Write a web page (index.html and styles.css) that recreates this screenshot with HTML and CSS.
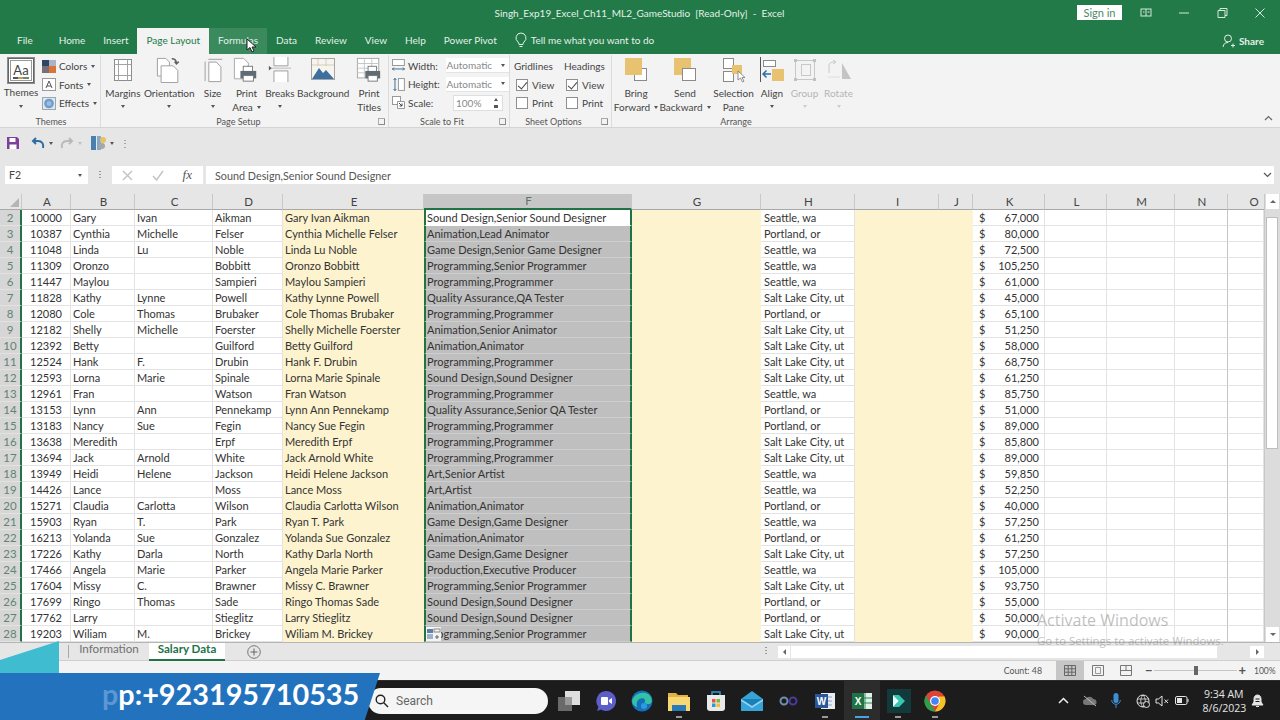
FILE: index.html
```html
<!DOCTYPE html>
<html>
<head>
    <title>Singh_Exp19_Excel_Ch11_ML2_GameStudio [Read-Only] - Excel</title>
    <link rel="stylesheet" href="styles.css">
</head>
<body>
    <header class="titlebar">
        <div class="title-row">
            <div class="doc-title">Singh_Exp19_Excel_Ch11_ML2_GameStudio&nbsp; [Read-Only]&nbsp; -&nbsp; Excel</div>
            <button class="sign-in">Sign in</button>
            <div class="window-buttons">
                <svg width="12" height="10" viewBox="0 0 12 10"><rect x="1" y="1" width="10" height="7" fill="none" stroke="#d5e8dc"/><path d="M6 1v7M3 4h1.500M7.500 4h2" stroke="#d5e8dc"/></svg>
                <svg width="12" height="10" viewBox="0 0 12 10"><path d="M1 5h10" stroke="#d5e8dc"/></svg>
                <svg width="12" height="10" viewBox="0 0 12 10"><path d="M2 2.500h7v7H2zM4 2.500V.5h7v7H9" fill="none" stroke="#d5e8dc"/></svg>
                <svg width="12" height="10" viewBox="0 0 12 10"><path d="M1.500 .5l9 9M10.500 .5l-9 9" stroke="#d5e8dc"/></svg>
            </div>
        </div>
        <nav class="tab-row">
            <span class="tab tab-file">File</span>
            <span class="tab">Home</span>
            <span class="tab">Insert</span>
            <span class="tab tab-active">Page Layout</span>
            <span class="tab tab-hover">Formulas</span>
            <span class="tab">Data</span>
            <span class="tab">Review</span>
            <span class="tab">View</span>
            <span class="tab">Help</span>
            <span class="tab">Power Pivot</span>
            <span class="tell-me">
                <svg width="12" height="16" viewBox="0 0 12 16"><path d="M6 1a5 5 0 0 0-3 9c.6.600 1 1.500 1 2.500h4c0-1 .4-1.900 1-2.500a5 5 0 0 0-3-9zM4.500 14.500h3" fill="none" stroke="#e4f1e9"/></svg>
                Tell me what you want to do
            </span>
            <span class="share">
                <svg width="14" height="14" viewBox="0 0 14 14"><circle cx="6" cy="4.500" r="3.500" fill="none" stroke="#e4f1e9"/><path d="M1 13c.5-3 2-4.500 5-4.500M9 11.500h4M11 9.500v4" fill="none" stroke="#e4f1e9"/></svg>
                Share
            </span>
        </nav>
    </header>

    <section class="ribbon">
        <div class="group group-themes">
            <div class="group-body">
                <div class="big btn-themes">
                    <div class="themes-icon"><span>Aa</span><i></i></div>
                    <span>Themes</span>
                    <span class="caret-line"><i class="caret"></i></span>
                </div>
                <div class="small-list">
                    <div class="small-item">
                        <svg width="14" height="13" viewBox="0 0 14 13"><rect width="7" height="6" fill="#2f4565"/><rect x="7" width="7" height="6" fill="#a9b4c6"/><rect y="6" width="7" height="7" fill="#7a6f78"/><rect x="7" y="6" width="7" height="7" fill="#d9743b"/></svg>
                        <span>Colors</span><i class="caret"></i>
                    </div>
                    <div class="small-item">
                        <svg class="font-box" width="14" height="13" viewBox="0 0 14 13"><rect x=".5" y=".5" width="13" height="12" fill="#fff" stroke="#9a9a9a"/><path d="M4 10l3-7 3 7M5 8h4" fill="none" stroke="#555"/></svg>
                        <span>Fonts</span><i class="caret"></i>
                    </div>
                    <div class="small-item">
                        <svg width="14" height="13" viewBox="0 0 14 13"><rect x=".5" y=".5" width="13" height="12" fill="#dfe6ee" stroke="#9aa7b5"/><circle cx="7" cy="6.500" r="4.800" fill="#6d9bcb"/><circle cx="7" cy="6.500" r="2.500" fill="#9dbcdc"/></svg>
                        <span>Effects</span><i class="caret"></i>
                    </div>
                </div>
            </div>
            <div class="group-label">Themes</div>
        </div>

        <div class="group group-page">
            <div class="group-body">
                <div class="big btn-margins">
                    <svg class="big-icon" width="22" height="26" viewBox="0 0 22 26"><rect x="2.500" y="2.500" width="17" height="21" fill="#fff" stroke="#8d8d8d"/><path d="M6.500 2.500v21M15.500 2.500v21M2.500 7.500h17M2.500 18.500h17" stroke="#a3a3a3"/></svg>
                    <span>Margins</span>
                    <span class="caret-line"><i class="caret"></i></span>
                </div>
                <div class="big btn-orientation">
                    <svg class="big-icon" width="28" height="28" viewBox="0 0 28 28"><path d="M1.500 1.500h9l4 4v15h-13z" fill="#fff" stroke="#9a9a9a"/><path d="M5.500 9.500h13l5 5v13h-18z" fill="#fff" stroke="#9a9a9a"/><path d="M17 2c3 0 4.500 1 5 4M20 5l2 2.500L24.500 5" fill="none" stroke="#5d6268" stroke-width="1.600"/></svg>
                    <span>Orientation</span>
                    <span class="caret-line"><i class="caret"></i></span>
                </div>
                <div class="big btn-size">
                    <svg class="big-icon" width="22" height="28" viewBox="0 0 22 28"><path d="M6.500 5.500h8l5 5v16h-13z" fill="#fff" stroke="#9a9a9a"/><path d="M6 2.500h15M2.500 5v21" stroke="#9a9a9a"/></svg>
                    <span>Size</span>
                    <span class="caret-line"><i class="caret"></i></span>
                </div>
                <div class="big btn-area">
                    <svg class="big-icon" width="28" height="28" viewBox="0 0 28 28"><path d="M1.500 1.500h10l5 5v17h-15z" fill="#fff" stroke="#a5a5a5"/><rect x="11" y="10" width="10" height="7" fill="#fff" stroke="#777"/><rect x="8" y="15" width="17" height="8" fill="#5f6b75"/><rect x="11" y="20" width="11" height="6" fill="#fff" stroke="#777"/></svg>
                    <span>Print</span>
                    <span>Area<i class="caret caret-inline"></i></span>
                </div>
                <div class="big btn-breaks">
                    <svg class="big-icon" width="26" height="28" viewBox="0 0 26 28"><path d="M6.500 0v9.500h15V0M6.500 27v-12h15v12" fill="#fff" stroke="#9a9a9a"/><path d="M1 12h24" stroke="#b9b9b9"/><path d="M1 9.500l3 2.500-3 2.500z" fill="#5a5a5a"/></svg>
                    <span>Breaks</span>
                    <span class="caret-line"><i class="caret"></i></span>
                </div>
                <div class="big btn-background">
                    <svg class="big-icon" width="24" height="24" viewBox="0 0 24 24"><rect x=".5" y=".5" width="23" height="21" fill="#f7f4ee" stroke="#a5a5a5"/><path d="M1 7h22M7 1v7M15 1v7" stroke="#d5cdb9"/><path d="M1 21l7-11 4 5 3-3 8 9z" fill="#3d6f9f"/></svg>
                    <span>Background</span>
                </div>
                <div class="big btn-titles">
                    <svg class="big-icon" width="26" height="28" viewBox="0 0 26 28"><rect x=".5" y="1.500" width="23" height="21" fill="#fff" stroke="#a5a5a5"/><path d="M.5 7h23M.5 12h23M.5 17h23M8 1.500v21M16 1.500v21" stroke="#c4c4c4"/><rect x="12" y="10" width="9" height="7" fill="#fff" stroke="#777"/><rect x="9" y="15" width="16" height="8" fill="#5f6b75"/><rect x="12" y="20" width="10" height="6" fill="#fff" stroke="#777"/></svg>
                    <span>Print</span>
                    <span>Titles</span>
                </div>
            </div>
            <div class="group-label label-launch">Page Setup<i class="launcher"></i></div>
        </div>

        <div class="group group-scale">
            <div class="group-body scale-rows">
                <div class="scale-row">
                    <svg width="13" height="13" viewBox="0 0 13 13"><rect x=".5" y=".5" width="12" height="6" fill="#fff" stroke="#999"/><path d="M0 10h13M2 8.500L.5 10 2 11.500M11 8.500l1.500 1.500-1.500 1.500" fill="none" stroke="#3f6f94"/></svg>
                    <label>Width:</label>
                    <div class="combo">Automatic<i class="caret"></i></div>
                </div>
                <div class="scale-row">
                    <svg width="13" height="13" viewBox="0 0 13 13"><rect x="6.500" y=".5" width="6" height="12" fill="#fff" stroke="#999"/><path d="M3 0v13M1.500 2L3 .5 4.500 2M1.500 11L3 12.500 4.500 11" fill="none" stroke="#3f6f94"/></svg>
                    <label>Height:</label>
                    <div class="combo">Automatic<i class="caret"></i></div>
                </div>
                <div class="scale-row">
                    <svg width="13" height="13" viewBox="0 0 13 13"><rect x=".5" y=".5" width="8" height="8" fill="#fff" stroke="#999"/><path d="M5.500 5.500h7v7h-7z" fill="#fff" stroke="#999"/><path d="M7 7l3 3M10 7.500V10H7.500" fill="none" stroke="#444"/></svg>
                    <label>Scale:</label>
                    <div class="spin">100%<i class="spin-arrows"></i></div>
                </div>
            </div>
            <div class="group-label label-launch">Scale to Fit<i class="launcher"></i></div>
        </div>

        <div class="group group-sheet">
            <div class="group-body sheet-cols">
                <div class="sheet-col">
                    <div class="sheet-head">Gridlines</div>
                    <div class="check-row"><i class="check checked"></i>View</div>
                    <div class="check-row"><i class="check"></i>Print</div>
                </div>
                <div class="sheet-col">
                    <div class="sheet-head">Headings</div>
                    <div class="check-row"><i class="check checked"></i>View</div>
                    <div class="check-row"><i class="check"></i>Print</div>
                </div>
            </div>
            <div class="group-label label-launch">Sheet Options<i class="launcher"></i></div>
        </div>

        <div class="group group-arrange">
            <div class="group-body">
                <div class="big btn-forward">
                    <svg class="big-icon" width="24" height="24" viewBox="0 0 24 24"><rect x="10.500" y="10.500" width="12" height="12" fill="#fff" stroke="#8a8a8a"/><rect x="1" y="0" width="17" height="17" fill="#e6c271"/></svg>
                    <span>Bring</span>
                    <span>Forward<i class="caret caret-inline"></i></span>
                </div>
                <div class="big btn-backward">
                    <svg class="big-icon" width="24" height="24" viewBox="0 0 24 24"><rect x="1" y="0" width="17" height="17" fill="#e6c271"/><rect x="9.500" y="10.500" width="13" height="12" fill="#fff" stroke="#8a8a8a"/></svg>
                    <span>Send</span>
                    <span>Backward<i class="caret caret-inline"></i></span>
                </div>
                <div class="big btn-pane">
                    <svg class="big-icon" width="24" height="24" viewBox="0 0 24 24"><rect x="1.500" y=".5" width="10" height="10" fill="#fff" stroke="#8a8a8a"/><rect x="1.500" y="13.500" width="10" height="10" fill="#fff" stroke="#8a8a8a"/><rect x="10" y="7" width="10" height="9" fill="#e6c271"/><path d="M16 13v9l2.500-2 2 4 1.500-.8-2-3.700h3z" fill="#fff" stroke="#777" stroke-width=".8"/></svg>
                    <span>Selection</span>
                    <span>Pane</span>
                </div>
                <div class="big btn-align">
                    <svg class="big-icon" width="26" height="26" viewBox="0 0 26 26"><path d="M1.500 0v25" stroke="#555"/><rect x="4.500" y="3.500" width="12" height="6" fill="#fff" stroke="#8a8a8a"/><rect x="13" y="12" width="12" height="12" fill="#e6c271"/><path d="M4 17h8M7.500 13.500L4 17l3.500 3.500" fill="none" stroke="#2b6ea5" stroke-width="1.500"/></svg>
                    <span>Align</span>
                    <span class="caret-line"><i class="caret"></i></span>
                </div>
                <div class="big btn-group muted">
                    <svg class="big-icon" width="26" height="26" viewBox="0 0 26 26"><rect x="3.500" y="3.500" width="19" height="19" fill="none" stroke="#c8c8c8"/><rect x="9.500" y="7.500" width="9" height="11" fill="none" stroke="#c8c8c8"/><path d="M2 2h3v3H2zM21 2h3v3h-3zM2 21h3v3H2zM21 21h3v3h-3z" fill="#c0c0c0"/></svg>
                    <span>Group</span>
                    <span class="caret-line"><i class="caret"></i></span>
                </div>
                <div class="big btn-rotate muted">
                    <svg class="big-icon" width="26" height="26" viewBox="0 0 26 26"><path d="M16 6l9 16h-9z" fill="#c4c4c4"/><path d="M3 16V9c0-3 2-4 6-4M7 3l3 2-3 2" fill="none" stroke="#c8c8c8"/><path d="M2 20h12" stroke="#dcdcdc"/></svg>
                    <span>Rotate</span>
                    <span class="caret-line"><i class="caret"></i></span>
                </div>
            </div>
            <div class="group-label">Arrange</div>
        </div>
        <svg class="ribbon-collapse" width="9" height="6" viewBox="0 0 9 6"><path d="M1 5l3.500-3.500L8 5" fill="none" stroke="#666" stroke-width="1.200"/></svg>
    </section>

    <section class="qat">
        <svg width="12" height="12" viewBox="0 0 12 12"><path d="M0 0h10l2 2v10H0z" fill="#7d3f98"/><rect x="2.500" y="1" width="6" height="4" fill="#fff"/><rect x="2.500" y="7.500" width="7" height="4.500" fill="#fff"/></svg>
        <svg class="qat-undo" width="14" height="12" viewBox="0 0 14 12"><path d="M12 11c1-4-1-7-5-7H2M5 1L2 4l3 3" fill="none" stroke="#2d6da3" stroke-width="2"/></svg>
        <i class="caret"></i>
        <svg class="qat-redo" width="14" height="12" viewBox="0 0 14 12"><path d="M2 11C1 7 3 4 7 4h5M9 1l3 3-3 3" fill="none" stroke="#b9b9b9" stroke-width="2"/></svg>
        <i class="caret caret-faint"></i>
        <svg class="qat-cols" width="15" height="14" viewBox="0 0 15 14"><rect width="5" height="14" fill="#4a7fae"/><rect x="6" width="4" height="14" fill="#83a8c8"/><circle cx="12" cy="4" r="3" fill="#e4c265"/><circle cx="11" cy="10" r="3" fill="#a7a7a7"/></svg>
        <i class="caret"></i>
        <span class="qat-more">&#8942;</span>
    </section>

    <section class="formula-bar">
        <div class="name-box">F2<i class="caret"></i></div>
        <span class="grip"></span>
        <div class="fx-buttons">
            <svg width="11" height="11" viewBox="0 0 11 11"><path d="M1 1l9 9M10 1l-9 9" stroke="#c4c4c4" stroke-width="1.500"/></svg>
            <svg width="12" height="11" viewBox="0 0 12 11"><path d="M1 6l3.500 4L11 1" fill="none" stroke="#c4c4c4" stroke-width="1.500"/></svg>
            <em>fx</em>
        </div>
        <div class="formula-input">Sound Design,Senior Sound Designer
            <svg width="9" height="6" viewBox="0 0 9 6"><path d="M1 1l3.500 3.500L8 1" fill="none" stroke="#555" stroke-width="1.200"/></svg>
        </div>
    </section>

    <main class="sheet">
        <table class="grid">
            <colgroup>
                <col class="c-head"><col class="c-a"><col class="c-b"><col class="c-c"><col class="c-d"><col class="c-e"><col class="c-f"><col class="c-g"><col class="c-h"><col class="c-i"><col class="c-j"><col class="c-k"><col class="c-l"><col class="c-m"><col class="c-n"><col class="c-o">
            </colgroup>
            <thead>
                <tr><th class="corner"><i></i></th><th>A</th><th>B</th><th>C</th><th>D</th><th>E</th><th class="col-selected">F</th><th>G</th><th>H</th><th>I</th><th>J</th><th>K</th><th>L</th><th>M</th><th>N</th><th class="col-cut">O</th></tr>
            </thead>
            <tbody>
                <tr class="active-row"><th>2</th><td>10000</td><td>Gary</td><td>Ivan</td><td>Aikman</td><td>Gary Ivan Aikman</td><td>Sound Design,Senior Sound Designer</td><td></td><td>Seattle, wa</td><td></td><td></td><td><span>$</span>67,000</td><td></td><td></td><td></td><td></td></tr>
                <tr><th>3</th><td>10387</td><td>Cynthia</td><td>Michelle</td><td>Felser</td><td>Cynthia Michelle Felser</td><td>Animation,Lead Animator</td><td></td><td>Portland, or</td><td></td><td></td><td><span>$</span>80,000</td><td></td><td></td><td></td><td></td></tr>
                <tr><th>4</th><td>11048</td><td>Linda</td><td>Lu</td><td>Noble</td><td>Linda Lu Noble</td><td>Game Design,Senior Game Designer</td><td></td><td>Seattle, wa</td><td></td><td></td><td><span>$</span>72,500</td><td></td><td></td><td></td><td></td></tr>
                <tr><th>5</th><td>11309</td><td>Oronzo</td><td></td><td>Bobbitt</td><td>Oronzo Bobbitt</td><td>Programming,Senior Programmer</td><td></td><td>Seattle, wa</td><td></td><td></td><td><span>$</span>105,250</td><td></td><td></td><td></td><td></td></tr>
                <tr><th>6</th><td>11447</td><td>Maylou</td><td></td><td>Sampieri</td><td>Maylou Sampieri</td><td>Programming,Programmer</td><td></td><td>Seattle, wa</td><td></td><td></td><td><span>$</span>61,000</td><td></td><td></td><td></td><td></td></tr>
                <tr><th>7</th><td>11828</td><td>Kathy</td><td>Lynne</td><td>Powell</td><td>Kathy Lynne Powell</td><td>Quality Assurance,QA Tester</td><td></td><td>Salt Lake City, ut</td><td></td><td></td><td><span>$</span>45,000</td><td></td><td></td><td></td><td></td></tr>
                <tr><th>8</th><td>12080</td><td>Cole</td><td>Thomas</td><td>Brubaker</td><td>Cole Thomas Brubaker</td><td>Programming,Programmer</td><td></td><td>Portland, or</td><td></td><td></td><td><span>$</span>65,100</td><td></td><td></td><td></td><td></td></tr>
                <tr><th>9</th><td>12182</td><td>Shelly</td><td>Michelle</td><td>Foerster</td><td>Shelly Michelle Foerster</td><td>Animation,Senior Animator</td><td></td><td>Salt Lake City, ut</td><td></td><td></td><td><span>$</span>51,250</td><td></td><td></td><td></td><td></td></tr>
                <tr><th>10</th><td>12392</td><td>Betty</td><td></td><td>Guilford</td><td>Betty Guilford</td><td>Animation,Animator</td><td></td><td>Salt Lake City, ut</td><td></td><td></td><td><span>$</span>58,000</td><td></td><td></td><td></td><td></td></tr>
                <tr><th>11</th><td>12524</td><td>Hank</td><td>F.</td><td>Drubin</td><td>Hank F. Drubin</td><td>Programming,Programmer</td><td></td><td>Salt Lake City, ut</td><td></td><td></td><td><span>$</span>68,750</td><td></td><td></td><td></td><td></td></tr>
                <tr><th>12</th><td>12593</td><td>Lorna</td><td>Marie</td><td>Spinale</td><td>Lorna Marie Spinale</td><td>Sound Design,Sound Designer</td><td></td><td>Salt Lake City, ut</td><td></td><td></td><td><span>$</span>61,250</td><td></td><td></td><td></td><td></td></tr>
                <tr><th>13</th><td>12961</td><td>Fran</td><td></td><td>Watson</td><td>Fran Watson</td><td>Programming,Programmer</td><td></td><td>Seattle, wa</td><td></td><td></td><td><span>$</span>85,750</td><td></td><td></td><td></td><td></td></tr>
                <tr><th>14</th><td>13153</td><td>Lynn</td><td>Ann</td><td>Pennekamp</td><td>Lynn Ann Pennekamp</td><td>Quality Assurance,Senior QA Tester</td><td></td><td>Portland, or</td><td></td><td></td><td><span>$</span>51,000</td><td></td><td></td><td></td><td></td></tr>
                <tr><th>15</th><td>13183</td><td>Nancy</td><td>Sue</td><td>Fegin</td><td>Nancy Sue Fegin</td><td>Programming,Programmer</td><td></td><td>Portland, or</td><td></td><td></td><td><span>$</span>89,000</td><td></td><td></td><td></td><td></td></tr>
                <tr><th>16</th><td>13638</td><td>Meredith</td><td></td><td>Erpf</td><td>Meredith Erpf</td><td>Programming,Programmer</td><td></td><td>Salt Lake City, ut</td><td></td><td></td><td><span>$</span>85,800</td><td></td><td></td><td></td><td></td></tr>
                <tr><th>17</th><td>13694</td><td>Jack</td><td>Arnold</td><td>White</td><td>Jack Arnold White</td><td>Programming,Programmer</td><td></td><td>Salt Lake City, ut</td><td></td><td></td><td><span>$</span>89,000</td><td></td><td></td><td></td><td></td></tr>
                <tr><th>18</th><td>13949</td><td>Heidi</td><td>Helene</td><td>Jackson</td><td>Heidi Helene Jackson</td><td>Art,Senior Artist</td><td></td><td>Seattle, wa</td><td></td><td></td><td><span>$</span>59,850</td><td></td><td></td><td></td><td></td></tr>
                <tr><th>19</th><td>14426</td><td>Lance</td><td></td><td>Moss</td><td>Lance Moss</td><td>Art,Artist</td><td></td><td>Seattle, wa</td><td></td><td></td><td><span>$</span>52,250</td><td></td><td></td><td></td><td></td></tr>
                <tr><th>20</th><td>15271</td><td>Claudia</td><td>Carlotta</td><td>Wilson</td><td>Claudia Carlotta Wilson</td><td>Animation,Animator</td><td></td><td>Portland, or</td><td></td><td></td><td><span>$</span>40,000</td><td></td><td></td><td></td><td></td></tr>
                <tr><th>21</th><td>15903</td><td>Ryan</td><td>T.</td><td>Park</td><td>Ryan T. Park</td><td>Game Design,Game Designer</td><td></td><td>Seattle, wa</td><td></td><td></td><td><span>$</span>57,250</td><td></td><td></td><td></td><td></td></tr>
                <tr><th>22</th><td>16213</td><td>Yolanda</td><td>Sue</td><td>Gonzalez</td><td>Yolanda Sue Gonzalez</td><td>Animation,Animator</td><td></td><td>Portland, or</td><td></td><td></td><td><span>$</span>61,250</td><td></td><td></td><td></td><td></td></tr>
                <tr><th>23</th><td>17226</td><td>Kathy</td><td>Darla</td><td>North</td><td>Kathy Darla North</td><td>Game Design,Game Designer</td><td></td><td>Salt Lake City, ut</td><td></td><td></td><td><span>$</span>57,250</td><td></td><td></td><td></td><td></td></tr>
                <tr><th>24</th><td>17466</td><td>Angela</td><td>Marie</td><td>Parker</td><td>Angela Marie Parker</td><td>Production,Executive Producer</td><td></td><td>Seattle, wa</td><td></td><td></td><td><span>$</span>105,000</td><td></td><td></td><td></td><td></td></tr>
                <tr><th>25</th><td>17604</td><td>Missy</td><td>C.</td><td>Brawner</td><td>Missy C. Brawner</td><td>Programming,Senior Programmer</td><td></td><td>Salt Lake City, ut</td><td></td><td></td><td><span>$</span>93,750</td><td></td><td></td><td></td><td></td></tr>
                <tr><th>26</th><td>17699</td><td>Ringo</td><td>Thomas</td><td>Sade</td><td>Ringo Thomas Sade</td><td>Sound Design,Sound Designer</td><td></td><td>Portland, or</td><td></td><td></td><td><span>$</span>55,000</td><td></td><td></td><td></td><td></td></tr>
                <tr><th>27</th><td>17762</td><td>Larry</td><td></td><td>Stieglitz</td><td>Larry Stieglitz</td><td>Sound Design,Sound Designer</td><td></td><td>Portland, or</td><td></td><td></td><td><span>$</span>50,000</td><td></td><td></td><td></td><td></td></tr>
                <tr><th>28</th><td>19203</td><td>Wiliam</td><td>M.</td><td>Brickey</td><td>Wiliam M. Brickey</td><td>Programming,Senior Programmer</td><td></td><td>Salt Lake City, ut</td><td></td><td></td><td><span>$</span>90,000</td><td></td><td></td><td></td><td></td></tr>
            </tbody>
        </table>
        <svg class="paste-tag" width="15" height="14" viewBox="0 0 15 14"><rect width="15" height="14" fill="#f4f4f4"/><rect x="1" y="2" width="6" height="4" fill="#5d7fa3"/><rect x="8" y="2" width="6" height="3" fill="none" stroke="#888"/><rect x="1" y="7" width="6" height="5" fill="#9bb2c9"/><path d="M9 10h4M11 8v4" stroke="#666"/></svg>
        <div class="vscroll">
            <div class="scroll-btn"><i class="tri-up"></i></div>
            <div class="vtrack"><div class="vthumb"></div></div>
            <div class="scroll-btn"><i class="tri-down"></i></div>
        </div>
    </main>

    <section class="sheet-tabs">
        <span class="tab-sep"></span>
        <span class="sheet-tab">Information</span>
        <span class="sheet-tab sheet-tab-active">Salary Data</span>
        <svg class="add-sheet" width="14" height="14" viewBox="0 0 14 14"><circle cx="7" cy="7" r="6.300" fill="none" stroke="#777"/><path d="M3.500 7h7M7 3.500v7" stroke="#666"/></svg>
        <div class="hscroll">
            <span class="grip"></span>
            <div class="scroll-btn"><i class="tri-left"></i></div>
            <div class="hthumb"></div>
            <div class="htrack"></div>
            <div class="scroll-btn scroll-btn-wide"><i class="tri-right"></i></div>
        </div>
    </section>

    <footer class="statusbar">
        <span class="count">Count: 48</span>
        <span class="view-btn view-on">
            <svg width="12" height="11" viewBox="0 0 12 11"><path d="M.5.500h11v10H.5zM.5 3.800h11M.5 7.200h11M4.200.5v10M7.800.5v10" fill="none" stroke="#666"/></svg>
        </span>
        <span class="view-btn">
            <svg width="12" height="11" viewBox="0 0 12 11"><path d="M.5.500h11v10H.5z" fill="none" stroke="#777"/><path d="M3.500 2.500h5v6h-5z" fill="none" stroke="#999"/></svg>
        </span>
        <span class="view-btn">
            <svg width="12" height="11" viewBox="0 0 12 11"><path d="M.5.500h11v10H.5zM.5 5.500h11M6 .5v5" fill="none" stroke="#777"/></svg>
        </span>
        <div class="zoom-slider">
            <span class="zoom-sign">&minus;</span>
            <div class="slider-track"><i></i></div>
            <span class="zoom-sign">+</span>
        </div>
        <span class="zoom-level">100%</span>
    </footer>

    <section class="taskbar">
        <div class="search-box">
            <svg width="14" height="14" viewBox="0 0 14 14"><circle cx="5.500" cy="5.500" r="4.300" fill="none" stroke="#222" stroke-width="1.400"/><path d="M8.800 8.800L13 13" stroke="#222" stroke-width="1.400"/></svg>
            <span>Search</span>
        </div>
        <div class="task-icons">
            <span class="task-icon">
                <svg width="22" height="20" viewBox="0 0 22 20"><rect y="6" width="14" height="14" fill="#6a6a6a"/><rect x="7" width="15" height="14" fill="#dedede"/><rect x="7" y="6" width="7" height="8" fill="#9a9a9a"/></svg>
            </span>
            <span class="task-icon">
                <svg width="22" height="22" viewBox="0 0 22 22"><path d="M11 1a10 10 0 1 1-5 18.600L2 21l1.400-4A10 10 0 0 1 11 1z" fill="#5b5fc7"/><rect x="6" y="7" width="7" height="8" rx="1" fill="#fff"/><path d="M14 10l3-2v6l-3-2z" fill="#fff"/></svg>
            </span>
            <span class="task-icon">
                <svg width="22" height="22" viewBox="0 0 22 22"><circle cx="11" cy="11" r="10.500" fill="#1271b8"/><path d="M1 11C3 3 12 1 17 4c4 2.500 5 8 2.500 9.500-2 1-5 .5-6-1 2-3-1-5-4-4-3 1-5 5-3 9C3 16 1 14 1 11z" fill="#35c1a5"/><circle cx="13" cy="16" r="3" fill="#2d9ae0"/></svg>
            </span>
            <span class="task-icon task-open">
                <svg width="22" height="20" viewBox="0 0 22 20"><path d="M0 2h8l2 2h10v15H0z" fill="#e2b33f"/><path d="M0 6h22v14H0z" fill="#f8d775"/><rect x="4" y="14" width="14" height="6" fill="#2a7ab8"/></svg>
            </span>
            <span class="task-icon">
                <svg width="20" height="21" viewBox="0 0 20 21"><path d="M1 5h18v13a3 3 0 0 1-3 3H4a3 3 0 0 1-3-3z" fill="#e9e9e9"/><path d="M6 5V2h8v3" fill="none" stroke="#2b9bd6" stroke-width="1.500"/><rect x="6" y="9" width="3.500" height="3.500" fill="#e8563f"/><rect x="10.500" y="9" width="3.500" height="3.500" fill="#7cb83f"/><rect x="6" y="13.500" width="3.500" height="3.500" fill="#2b9bd6"/><rect x="10.500" y="13.500" width="3.500" height="3.500" fill="#f3bd2f"/></svg>
            </span>
            <span class="task-icon">
                <svg width="22" height="20" viewBox="0 0 22 20"><path d="M0 8l11-8 11 8v12H0z" fill="#36a3d9"/><path d="M0 8l11 7 11-7" fill="#1c7fb6"/><path d="M0 8l11 7 11-7v2l-11 7L0 10z" fill="#8fd4f2"/></svg>
            </span>
            <span class="task-icon">
                <svg width="20" height="10" viewBox="0 0 20 10"><circle cx="5" cy="5" r="3.500" fill="none" stroke="#6f8fb0" stroke-width="2"/><circle cx="14" cy="5" r="3.500" fill="none" stroke="#4b3aa0" stroke-width="2"/></svg>
            </span>
            <span class="task-icon task-open">
                <svg width="20" height="20" viewBox="0 0 20 20"><rect x="6" y="2" width="14" height="16" fill="#e8edf4"/><path d="M9 6h8M9 10h8M9 14h8" stroke="#8aa4c8"/><rect y="3" width="13" height="14" fill="#2b579a"/><text x="6.500" y="14" font-family="Liberation Sans" font-size="10" font-weight="700" fill="#fff" text-anchor="middle">W</text></svg>
            </span>
            <span class="task-icon task-current">
                <svg width="22" height="20" viewBox="0 0 22 20"><rect x="8" y="2" width="13" height="16" fill="#e3efe7"/><path d="M14 2v16M8 7h13M8 12h13" stroke="#218a52"/><rect x="1" y="2" width="12" height="16" fill="#217346"/><text x="7" y="14" font-family="Liberation Sans" font-size="10" font-weight="700" fill="#fff" text-anchor="middle">X</text></svg>
            </span>
            <span class="task-icon task-open task-dark">
                <svg width="16" height="16" viewBox="0 0 16 16"><path d="M2 2h6l6 6-6 6H2l6-6z" fill="#37c6b4"/><path d="M2 2l6 6-6 6z" fill="#dff"/></svg>
            </span>
            <span class="task-icon task-open">
                <svg width="22" height="22" viewBox="0 0 22 22"><circle cx="11" cy="11" r="10.500" fill="#db4437"/><path d="M2 5.500l5 9L11.500 21.500A10.500 10.500 0 0 1 2 5.500z" fill="#2f9e48"/><path d="M20.500 6.500A10.500 10.500 0 0 1 11 21.500l4.500-8-1-7z" fill="#f6c324"/><circle cx="11" cy="11" r="5" fill="#fff"/><circle cx="11" cy="11" r="3.800" fill="#4285f4"/></svg>
            </span>
        </div>
        <div class="tray">
            <svg width="11" height="7" viewBox="0 0 11 7"><path d="M1 6l4.500-4.500L10 6" fill="none" stroke="#eee" stroke-width="1.500"/></svg>
            <svg class="tray-cloud" width="14" height="12" viewBox="0 0 14 12"><path d="M3 10a3 3 0 0 1 0-6c1-3 6-3 7 0a3 3 0 0 1 1 6z" fill="#777"/><path d="M1 1l12 10" stroke="#bbb"/></svg>
            <svg class="tray-mic" width="10" height="15" viewBox="0 0 10 15"><rect x="2.500" y="0" width="5" height="10" rx="2.500" fill="#3d8fd1"/><path d="M.7 7a4.300 4.300 0 0 0 8.600 0M5 11.500V15" fill="none" stroke="#3d8fd1"/></svg>
            <svg class="tray-globe" width="14" height="14" viewBox="0 0 14 14"><circle cx="7" cy="7" r="6" fill="none" stroke="#e5e5e5"/><path d="M1 5h12M1 9h12M7 1c-3 3-3 9 0 12M7 1c3 3 3 9 0 12" fill="none" stroke="#e5e5e5" stroke-width=".8"/><circle cx="10.500" cy="10.500" r="3" fill="#1c1c1c" stroke="#e5e5e5"/></svg>
            <svg class="tray-sound" width="14" height="12" viewBox="0 0 14 12"><path d="M1 4h2.500L7 1v10L3.500 8H1z" fill="none" stroke="#e5e5e5"/><path d="M9.500 4.500l3.500 3.500M13 4.500L9.500 8" stroke="#e5e5e5"/></svg>
            <svg class="tray-battery" width="14" height="9" viewBox="0 0 14 9"><rect x=".5" y=".5" width="11.500" height="8" rx="1.500" fill="none" stroke="#e5e5e5"/><rect x="2" y="2" width="5" height="5" fill="#e5e5e5"/><path d="M13 3v3" stroke="#e5e5e5"/></svg>
            <div class="clock"><div>9:34 AM</div><div>8/6/2023</div></div>
            <svg class="tray-bell" width="13" height="14" viewBox="0 0 13 14"><path d="M6.500 1C4 1 3 3 3 5v3l-2 3h11l-2-3V5c0-2-1-4-3.500-4zM5 12.500h3" fill="#e5e5e5" stroke="#e5e5e5"/><path d="M4.500 5h4M4.500 7.500h4" stroke="#1c1c1c"/></svg>
        </div>
    </section>

    <!-- video overlay, sits on top of the app -->
    <div class="promo-teal"></div>
    <div class="promo-blue"><span class="promo-fade">p</span>p:+923195710535</div>
    <div class="watermark">
        <div class="wm-big">Activate Windows</div>
        <div class="wm-small">Go to Settings to activate Windows.</div>
    </div>
    <svg class="cursor" width="11" height="15" viewBox="0 0 11 15"><path d="M1 1v11l3-2.500 2 4.500 2-1-2-4h4z" fill="#fff" stroke="#222"/></svg>
</body>
</html>
```

FILE: styles.css
```css
* {
    box-sizing: border-box;
}
html, body {
    margin: 0;
    height: 100%;
}
body {
    position: relative;
    width: 1280px;
    height: 720px;
    overflow: hidden;
    display: flex;
    flex-direction: column;
    background-color: #e6e6e6;
    color: #444;
    font-family: Lato, Roboto, sans-serif;
    font-size: 10px;
}

/* title bar */
.titlebar {
    height: 54px;
    background-color: #217a47;
    color: #e4f1e9;
}
.title-row {
    height: 28px;
    padding-bottom: 3px;
    display: flex;
    align-items: center;
}
.doc-title {
    width: 1077px;
    padding-left: 202px;
    text-align: center;
}
.sign-in {
    width: 45px;
    height: 15px;
    padding: 0;
    border: none;
    background-color: #fff;
    color: #4d8a68;
    font-family: inherit;
    font-size: 11px;
    line-height: 15px;
}
.window-buttons {
    margin-left: 18px;
    width: 126px;
    display: flex;
    justify-content: space-between;
}
.tab-row {
    height: 26px;
    display: flex;
    align-items: stretch;
}
.tab {
    padding: 0 9px 2px;
    display: flex;
    align-items: center;
}
.tab-file {
    margin: 0 8px;
}
.tab-active {
    background-color: #f3f3f3;
    color: #217a47;
}
.tab-hover {
    background-color: #3a8a5e;
}
.tell-me {
    margin-left: 9px;
    padding-bottom: 2px;
    display: flex;
    align-items: center;
    gap: 4px;
}
.share {
    margin-left: auto;
    padding-right: 16px;
    display: flex;
    align-items: center;
    gap: 3px;
    font-weight: 700;
}

/* ribbon */
.ribbon {
    position: relative;
    height: 74px;
    flex: none;
    display: flex;
    background-color: #f3f3f3;
    border-bottom: 1px solid #d4d4d4;
}
.group {
    display: flex;
    flex-direction: column;
    height: 72px;
    margin-top: 1px;
    border-right: 1px solid #dcdcdc;
}
.group-themes { width: 101px; padding-left: 2px; }
.group-page { width: 288px; padding-left: 2px; }
.group-scale { width: 121px; }
.group-sheet { width: 102px; }
.group-arrange { width: 248px; border-right: none; }
.group-body {
    flex: none;
    height: 58px;
    display: flex;
}
.group-label {
    position: relative;
    height: 14px;
    text-align: center;
    font-size: 9px;
    line-height: 17px;
    color: #555;
}
.label-launch {
    padding-right: 14px;
}
.launcher {
    position: absolute;
    right: 3px;
    top: 5px;
    width: 7px;
    height: 7px;
    border: 1px solid #aaa;
    border-width: 1px 0 0 1px;
    box-shadow: inset -2px -2px 0 -1px #8a8a8a;
}
.big {
    display: flex;
    flex-direction: column;
    align-items: center;
    line-height: 14px;
    white-space: nowrap;
}
.big-icon {
    height: 30px;
    margin-bottom: 1px;
    padding: 2px 0;
    flex: none;
}
.muted {
    color: #b5b5b5;
}
.caret-line {
    height: 14px;
    display: flex;
    align-items: center;
}
.caret {
    display: inline-block;
    width: 0;
    height: 0;
    border-left: 2.500px solid transparent;
    border-right: 2.500px solid transparent;
    border-top: 3px solid #555;
}
.muted .caret {
    border-top-color: #ccc;
}
.caret-inline {
    margin-left: 4px;
    vertical-align: 2px;
}
.caret-faint {
    border-top-color: #c0c0c0;
}
.btn-themes { width: 38px; }
.btn-margins { width: 40px; }
.btn-orientation { width: 53px; }
.btn-size { width: 34px; }
.btn-area { width: 34px; }
.btn-breaks { width: 33px; }
.btn-background { width: 54px; }
.btn-titles { width: 38px; }
.btn-forward { width: 48px; }
.btn-backward { width: 50px; }
.btn-pane { width: 47px; }
.btn-align { width: 30px; }
.btn-group { width: 35px; }
.btn-rotate { width: 33px; }
.themes-icon {
    position: relative;
    width: 26px;
    height: 26px;
    margin: 3px 0 2px;
    padding-top: 3px;
    border: 1px solid #666;
    outline: 1px solid #999;
    outline-offset: -3px;
    background-color: #fff;
    text-align: center;
    font-size: 13px;
    line-height: 16px;
    color: #444;
    box-shadow: 0 0 0 1px #8d8d8d;
}
.themes-icon i {
    position: absolute;
    left: 4px;
    right: 4px;
    bottom: 3px;
    height: 2px;
    background: linear-gradient(90deg, #555 0 30%, #b8a262 30% 60%, #6f8a66 60%);
}
.small-list {
    margin-left: 2px;
    padding-top: 4px;
    display: flex;
    flex-direction: column;
    gap: 4.500px;
}
.small-item {
    height: 14px;
    display: flex;
    align-items: center;
    gap: 3px;
    line-height: 14px;
}
.small-item .caret {
    margin-left: 1px;
}

/* scale to fit + sheet options */
.scale-rows {
    flex-direction: column;
    padding: 3px 0 0 3px;
    gap: 3.500px;
}
.scale-row {
    height: 15px;
    display: flex;
    align-items: center;
    gap: 3px;
}
.scale-row label {
    width: 35px;
}
.combo {
    width: 64px;
    height: 15px;
    padding: 0 4px 0 1px;
    display: flex;
    align-items: center;
    justify-content: space-between;
    background-color: #fff;
    color: #888;
    border-bottom: 1px solid #e4e4e4;
}
.spin {
    position: relative;
    width: 50px;
    height: 16px;
    margin-left: 7px;
    padding-left: 2px;
    background-color: #fff;
    border: 1px solid #dedede;
    color: #888;
    line-height: 14px;
}
.spin-arrows {
    position: absolute;
    right: 4px;
    top: 2px;
    width: 0;
    height: 0;
    border-left: 2px solid transparent;
    border-right: 2px solid transparent;
    border-bottom: 3px solid #555;
    box-shadow: 0 7px 0 #555;
}
.sheet-cols {
    padding: 4px 0 0 4px;
    gap: 6px;
}
.sheet-col {
    width: 44px;
}
.sheet-head {
    height: 15px;
    margin-bottom: 4px;
    line-height: 15px;
}
.check-row {
    height: 14px;
    margin-bottom: 4px;
    display: flex;
    align-items: center;
    gap: 4px;
    padding-left: 2px;
}
.check {
    position: relative;
    width: 12px;
    height: 12px;
    background-color: #fff;
    border: 1px solid #8f8f8f;
}
.checked::after {
    content: "";
    position: absolute;
    left: 3px;
    top: 0;
    width: 4px;
    height: 8px;
    border: solid #444;
    border-width: 0 1px 1px 0;
    transform: rotate(40deg);
}
.ribbon-collapse {
    position: absolute;
    right: 7px;
    bottom: 6px;
}

/* quick access */
.qat {
    height: 38px;
    flex: none;
    padding: 0 0 8px 7px;
    display: flex;
    align-items: center;
    background-color: #e6e6e6;
}
.qat .caret {
    margin-left: 4px;
}
.qat-undo { margin-left: 12px; }
.qat-redo { margin-left: 7px; }
.qat-cols { margin-left: 9px; }
.qat-more {
    margin-left: 6px;
    font-size: 10px;
    color: #777;
}

/* formula bar */
.formula-bar {
    height: 18px;
    flex: none;
    padding-left: 5px;
    display: flex;
    background-color: #e6e6e6;
}
.name-box {
    width: 83px;
    padding: 0 6px 0 4px;
    display: flex;
    align-items: center;
    justify-content: space-between;
    background-color: #fff;
    font-size: 10.500px;
}
.grip {
    width: 2px;
    height: 9px;
    margin: 5px 11px;
    background: repeating-linear-gradient(180deg, #999 0 1px, transparent 1px 3px);
}
.fx-buttons {
    width: 91px;
    padding: 0 11px 0 10px;
    display: flex;
    align-items: center;
    justify-content: space-between;
    background-color: #fff;
}
.fx-buttons em {
    font-family: "Liberation Serif", serif;
    font-size: 13px;
    color: #555;
}
.formula-input {
    width: 1068px;
    margin-left: 3px;
    padding: 0 2px 0 9px;
    display: flex;
    align-items: center;
    justify-content: space-between;
    background-color: #fff;
    font-size: 10.800px;
    color: #555;
}

/* the sheet */
.sheet {
    position: relative;
    height: 448px;
    flex: none;
    margin-top: 10px;
    display: flex;
    background-color: #fff;
}
.grid {
    width: 1264px;
    flex: none;
    table-layout: fixed;
    border-collapse: separate;
    border-spacing: 0;
    font-size: 11px;
    color: #333;
}
.c-head { width: 22px; }
.c-a { width: 49px; }
.c-b { width: 64px; }
.c-c { width: 78px; }
.c-d { width: 70px; }
.c-e { width: 141px; }
.c-f { width: 208px; }
.c-g { width: 129px; }
.c-h { width: 94px; }
.c-i { width: 84px; }
.c-j { width: 34px; }
.c-k { width: 72px; }
.c-l { width: 62px; }
.c-m { width: 68px; }
.c-n { width: 53px; }
.c-o { width: 36px; }
.grid thead th {
    height: 16px;
    padding: 0 0 0 2px;
    background-color: #e6e6e6;
    border-right: 1px solid #c8c8c8;
    border-bottom: 1px solid #a8a8a8;
    font-weight: 400;
    font-size: 11.500px;
    color: #444;
    line-height: 14px;
}
.grid thead .corner {
    position: relative;
}
.corner i {
    position: absolute;
    right: 2px;
    bottom: 2px;
    width: 0;
    height: 0;
    border-left: 9px solid transparent;
    border-bottom: 9px solid #b5b5b5;
}
.grid thead .col-selected {
    background-color: #c6c6c6;
    border-bottom: 2px solid #217346;
    color: #5c7567;
}
.grid thead .col-cut {
    padding-left: 16px;
    border-right: none;
}
.grid tbody th {
    height: 16px;
    padding: 0;
    background-color: #d6d6d6;
    border-right: 2px solid #217346;
    border-bottom: 1px solid #e2e2e2;
    font-weight: 400;
    font-size: 11.500px;
    color: #638372;
}
.grid td {
    height: 16px;
    padding: 0 2px;
    overflow: hidden;
    white-space: nowrap;
    border-right: 1px solid #e3e3e3;
    border-bottom: 1px solid #e3e3e3;
    line-height: 14px;
}
.grid td:nth-child(2) {
    text-align: center;
}
.grid td:nth-child(9) {
    padding-left: 3px;
}
.grid td:nth-child(6),
.grid td:nth-child(8),
.grid td:nth-child(10),
.grid td:nth-child(11) {
    background-color: #fdf3cf;
    border-color: #fdf3cf;
}
.grid td:nth-child(7) {
    background-color: #bfbfbf;
    border-left: 2px solid #217346;
    border-right: 2px solid #217346;
    border-bottom-color: #cecece;
    padding-left: 1px;
}
.active-row td:nth-child(7) {
    background-color: #fff;
    border-bottom-color: #fff;
}
.grid td:nth-child(12) {
    padding: 0 5px 0 6px;
    text-align: right;
}
.grid td:nth-child(12) span {
    float: left;
}
.grid td:nth-child(15) {
    border-right-color: #c4c4c4;
}
.paste-tag {
    position: absolute;
    left: 426px;
    top: 433px;
}
.vscroll {
    width: 16px;
    display: flex;
    flex-direction: column;
    background-color: #dcdcdc;
    padding: 0 2px 0 1px;
    border-left: 1px solid #c8c8c8;
}
.scroll-btn {
    width: 13px;
    height: 15px;
    flex: none;
    display: flex;
    align-items: center;
    justify-content: center;
    background-color: #fff;
}
.tri-up, .tri-down, .tri-left, .tri-right {
    width: 0;
    height: 0;
    border: 3px solid transparent;
}
.tri-up { border-bottom-color: #666; border-top-width: 0; }
.tri-down { border-top-color: #666; border-bottom-width: 0; }
.tri-left { border-right-color: #666; border-left-width: 0; }
.tri-right { border-left-color: #666; border-right-width: 0; }
.vtrack {
    flex: 1;
    padding-top: 8px;
}
.vthumb {
    height: 232px;
    background-color: #fff;
    border: 1px solid #bdbdbd;
}

/* sheet tabs row */
.sheet-tabs {
    height: 19px;
    flex: none;
    padding-left: 68px;
    display: flex;
    align-items: flex-start;
    background-color: #e6e6e6;
    border-top: 1px solid #b5b5b5;
    border-bottom: 1px solid #cfcfcf;
}
.tab-sep {
    width: 1px;
    height: 13px;
    margin-top: 2px;
    background-color: #a8a8a8;
}
.sheet-tab {
    width: 80px;
    height: 18px;
    text-align: center;
    font-size: 11.600px;
    line-height: 12px;
    color: #707070;
}
.sheet-tab-active {
    width: 76px;
    background-color: #fff;
    border-bottom: 2px solid #217346;
    color: #217346;
    font-weight: 700;
}
.add-sheet {
    margin: 2px 0 0 22px;
}
.hscroll {
    margin-left: auto;
    padding-right: 16px;
    display: flex;
    align-items: center;
    height: 17px;
}
.hscroll .grip {
    margin: 3px 11px 3px 0;
}
.hscroll .scroll-btn {
    width: 12px;
    height: 12px;
}
.hscroll .scroll-btn-wide {
    width: 14px;
}
.hthumb {
    width: 426px;
    height: 12px;
    margin-left: 1px;
    background-color: #fff;
}
.htrack {
    width: 33px;
}

/* status bar */
.statusbar {
    height: 19px;
    flex: none;
    display: flex;
    align-items: center;
    justify-content: flex-end;
    padding-right: 6px;
    background-color: #f3f3f3;
    color: #555;
    font-size: 8.800px;
}
.count {
    margin-right: 14px;
}
.view-btn {
    width: 28px;
    height: 19px;
    display: flex;
    align-items: center;
    justify-content: center;
}
.view-on {
    background-color: #c6c6c6;
}
.zoom-slider {
    margin-left: 5px;
    width: 101px;
    display: flex;
    align-items: center;
    justify-content: space-between;
}
.zoom-sign {
    font-size: 13px;
    font-weight: 700;
    line-height: 13px;
    color: #555;
}
.slider-track {
    position: relative;
    width: 83px;
    height: 1px;
    background-color: #c6c6c6;
}
.slider-track i {
    position: absolute;
    left: 40px;
    top: -4px;
    width: 4px;
    height: 9px;
    background-color: #666;
}
.zoom-level {
    width: 20px;
    margin-left: 8px;
    font-size: 8.500px;
    white-space: nowrap;
}

/* windows taskbar */
.taskbar {
    height: 40px;
    flex: none;
    padding-left: 368px;
    display: flex;
    align-items: center;
    background-color: #1c1c1c;
    border-top: 1px solid #2c2c2c;
}
.search-box {
    width: 180px;
    height: 26px;
    padding-left: 7px;
    display: flex;
    align-items: center;
    gap: 7px;
    background-color: #f5f5f5;
    border-radius: 13px;
    color: #666;
    font-size: 12px;
    font-family: Roboto, sans-serif;
}
.task-icons {
    margin-left: 3px;
    display: flex;
}
.task-icon {
    position: relative;
    width: 36.600px;
    height: 39px;
    display: flex;
    align-items: center;
    justify-content: center;
}
.task-open::after, .task-current::after {
    content: "";
    position: absolute;
    bottom: 2px;
    left: 15px;
    width: 6px;
    height: 2px;
    background-color: #999;
}
.task-current {
    background-color: #2c2c2c;
}
.task-current::after {
    left: 11px;
    width: 14px;
    background-color: #4aa3e0;
}
.task-dark svg {
    background-color: #133a3a;
    outline: 4px solid #133a3a;
}
.tray {
    padding-left: 104px;
    display: flex;
    align-items: center;
    flex: none;
}
.tray-cloud, .tray-mic { margin-left: 14px; }
.tray-globe { margin-left: 15px; }
.tray-sound { margin-left: 5px; }
.tray-battery { margin-left: 6px; }
.tray-bell { margin-left: 7px; }
.clock {
    width: 41px;
    margin-left: 14px;
    text-align: right;
    color: #e5e5e5;
    font-family: "Open Sans", sans-serif;
    font-size: 10.500px;
    line-height: 14px;
    white-space: nowrap;
}

/* overlays */
.promo-teal {
    position: absolute;
    left: 0;
    top: 641px;
    width: 59px;
    height: 32px;
    background-color: #3fbcd0;
    clip-path: polygon(0 19px, 100% 0, 100% 100%, 0 100%);
}
.promo-blue {
    position: absolute;
    left: 0;
    top: 673px;
    width: 380px;
    height: 47px;
    padding: 3px 0 0 102px;
    background-color: #2272bd;
    clip-path: polygon(0 0, 100% 0, 96% 100%, 0 100%);
    color: #fff;
    font-weight: 700;
    font-size: 28.800px;
    line-height: 36px;
}
.promo-fade {
    color: #5d97d5;
}
.watermark {
    position: absolute;
    left: 1037px;
    top: 610px;
    color: rgba(130, 130, 130, 0.5);
    font-family: "Open Sans", sans-serif;
}
.wm-big {
    font-size: 16px;
    line-height: 21px;
}
.wm-small {
    font-size: 11.400px;
    line-height: 20px;
}
.cursor {
    position: absolute;
    left: 246px;
    top: 38px;
}
```
